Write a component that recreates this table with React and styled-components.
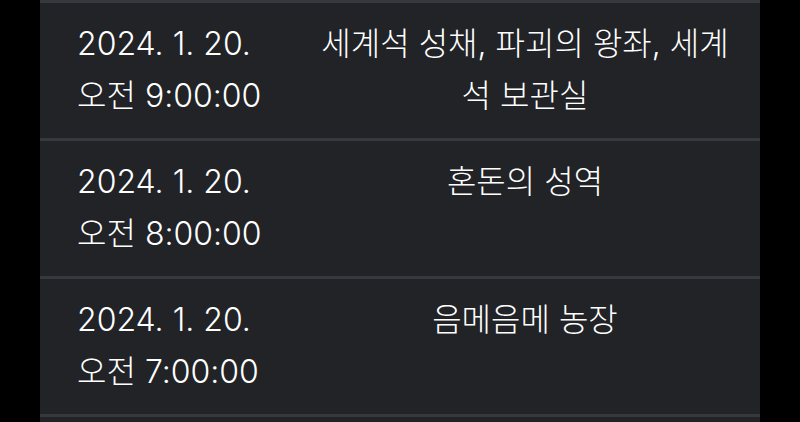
import React from "react";
import styled, { createGlobalStyle } from "styled-components";

const records = [
  { date: "2024. 1. 20.", time: "오전 9:00:00", place: "세계석 성채, 파괴의 왕좌, 세계석 보관실" },
  { date: "2024. 1. 20.", time: "오전 8:00:00", place: "혼돈의 성역" },
  { date: "2024. 1. 20.", time: "오전 7:00:00", place: "음메음메 농장" },
];

export default function App() {
  return (
    <>
      <GlobalStyle />
      <Panel>
        {records.map((r, i) => (
          <Row key={i}>
            <DateCell>
              {r.date}
              <br />
              {r.time}
            </DateCell>
            <PlaceCell>{r.place}</PlaceCell>
          </Row>
        ))}
        <Row />
      </Panel>
    </>
  );
}

const GlobalStyle = createGlobalStyle`
  html, body {
    margin: 0;
    background: #000;
    overflow: hidden;
  }
  body {
    font-family: Inter, "Noto Sans CJK KR", sans-serif;
  }
`;

const Panel = styled.div`
  width: 720px;
  height: 422px;
  overflow: hidden;
  margin: 0 auto;
  background: #212327;
`;

const Row = styled.div`
  display: grid;
  grid-template-columns: 275px 420px;
  border-top: 3px solid #35383c;
  height: 138px;
  box-sizing: border-box;
  padding: 15px 0;
  color: #fff;
  font-size: 32px;
  font-weight: 300;
  line-height: 52px;
`;

const DateCell = styled.div`
  padding-left: 37px;
`;

const PlaceCell = styled.div`
  text-align: center;
  word-break: break-all;
`;
